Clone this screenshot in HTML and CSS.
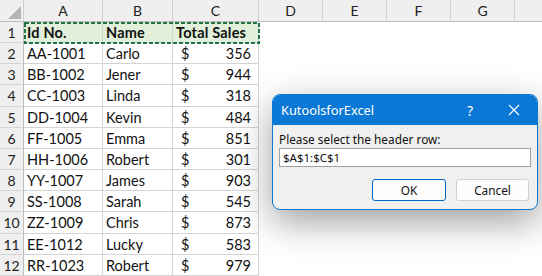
FILE: index.html
```html
<!DOCTYPE html>
<html lang="en">

<head>
    <meta charset="UTF-8">
    <meta name="viewport" content="width=device-width, initial-scale=1.0">
    <title>Select header row</title>

    <!--Style-->

    <link rel="stylesheet" href="styles.css">
</head>

<body>
    <div class="sheet">

        <!--Column headers-->

        <div class="colHeaders">
            <div class="corner"><span class="cornerMark"></span></div>
            <div class="colHead colA">A</div>
            <div class="colHead colB">B</div>
            <div class="colHead colC">C</div>
            <div class="colHead colWide">D</div>
            <div class="colHead colWide">E</div>
            <div class="colHead colWide">F</div>
            <div class="colHead colWide">G</div>
            <div class="colHead colRest"></div>
        </div>

        <!--Cells-->

        <div class="grid">
            <div class="rowHead">1</div>
            <div class="cell head">Id No.</div>
            <div class="cell head">Name</div>
            <div class="cell head">Total Sales</div>

            <div class="rowHead">2</div>
            <div class="cell">AA-1001</div>
            <div class="cell">Carlo</div>
            <div class="cell money"><span>$</span><span>356</span></div>

            <div class="rowHead">3</div>
            <div class="cell">BB-1002</div>
            <div class="cell">Jener</div>
            <div class="cell money"><span>$</span><span>944</span></div>

            <div class="rowHead">4</div>
            <div class="cell">CC-1003</div>
            <div class="cell">Linda</div>
            <div class="cell money"><span>$</span><span>318</span></div>

            <div class="rowHead">5</div>
            <div class="cell">DD-1004</div>
            <div class="cell">Kevin</div>
            <div class="cell money"><span>$</span><span>484</span></div>

            <div class="rowHead">6</div>
            <div class="cell">FF-1005</div>
            <div class="cell">Emma</div>
            <div class="cell money"><span>$</span><span>851</span></div>

            <div class="rowHead">7</div>
            <div class="cell">HH-1006</div>
            <div class="cell">Robert</div>
            <div class="cell money"><span>$</span><span>301</span></div>

            <div class="rowHead">8</div>
            <div class="cell">YY-1007</div>
            <div class="cell">James</div>
            <div class="cell money"><span>$</span><span>903</span></div>

            <div class="rowHead">9</div>
            <div class="cell">SS-1008</div>
            <div class="cell">Sarah</div>
            <div class="cell money"><span>$</span><span>545</span></div>

            <div class="rowHead">10</div>
            <div class="cell">ZZ-1009</div>
            <div class="cell">Chris</div>
            <div class="cell money"><span>$</span><span>873</span></div>

            <div class="rowHead">11</div>
            <div class="cell">EE-1012</div>
            <div class="cell">Lucky</div>
            <div class="cell money"><span>$</span><span>583</span></div>

            <div class="rowHead">12</div>
            <div class="cell">RR-1023</div>
            <div class="cell">Robert</div>
            <div class="cell money"><span>$</span><span>979</span></div>

            <!--copy marquee around A1:C1-->
            <svg class="marquee" width="236" height="22" viewBox="0 0 236 22">
                <rect x="1" y="1" width="234" height="20" fill="none" stroke="#217346" stroke-width="2" stroke-dasharray="4 2"></rect>
            </svg>
        </div>
    </div>

    <!--Dialog-->

    <div class="dialog">
        <div class="titleBar">
            <span class="titleText">KutoolsforExcel</span>
            <span class="helpBtn">?</span>
            <span class="closeBtn">
                <svg width="12" height="12" viewBox="0 0 12 12">
                    <path d="M1 1 L11 11 M11 1 L1 11" stroke="#ffffff" stroke-width="1.1" fill="none"></path>
                </svg>
            </span>
        </div>
        <div class="dialogBody">
            <div class="label">Please select the header row:</div>
            <div class="rangeInput">$A$1:$C$1</div>
            <div class="buttons">
                <button class="okButton">OK</button>
                <button class="cancelButton">Cancel</button>
            </div>
        </div>
    </div>
</body>

</html>
```

FILE: styles.css
```css
body {
    margin: 0;
    width: 542px;
    height: 276px;
    overflow: hidden;
    background-color: white;
    font-family: Lato, "Liberation Sans", sans-serif;
    position: relative;
}

/* column header bar */

.colHeaders {
    display: flex;
    height: 22px;
    background-color: #efefef;
    border-bottom: 1px solid #bdbdbd;
    box-sizing: border-box;
}

.corner {
    width: 24px;
    border-right: 1px solid #d0d0d0;
    box-sizing: border-box;
    position: relative;
}

.cornerMark {
    position: absolute;
    left: 8px;
    top: 6px;
    width: 0;
    height: 0;
    border-left: 13px solid transparent;
    border-bottom: 13px solid #b4b4b4;
}

.colHead {
    border-right: 1px solid #d0d0d0;
    box-sizing: border-box;
    text-align: center;
    font-size: 14px;
    line-height: 21px;
    color: #222;
}

.colA {
    width: 79px;
}

.colB {
    width: 70px;
}

.colC {
    width: 86px;
}

.colWide {
    width: 64px;
}

.colRest {
    flex: 1;
    border-right: none;
}

/* cells */

.grid {
    display: grid;
    grid-template-columns: 24px 79px 70px 86px;
    grid-auto-rows: 21.17px;
    width: 259px;
    position: relative;
}

.rowHead {
    background-color: #efefef;
    border-right: 1px solid #bdbdbd;
    border-bottom: 1px solid #d4d4d4;
    text-align: center;
    font-size: 14px;
    line-height: 21px;
    color: #222;
}

.cell {
    border-right: 1px solid #d4d4d4;
    border-bottom: 1px solid #d4d4d4;
    padding-left: 3px;
    font-size: 14.5px;
    line-height: 21px;
    color: #111;
    white-space: nowrap;
    overflow: hidden;
}

.head {
    background-color: #e2efda;
    font-weight: bold;
    letter-spacing: 0.2px;
}

.money {
    display: flex;
    justify-content: space-between;
    padding-left: 8px;
    padding-right: 7px;
}

.marquee {
    position: absolute;
    left: 24px;
    top: 0;
}

/* dialog */

.dialog {
    position: absolute;
    left: 272px;
    top: 94px;
    width: 266px;
    height: 116px;
    box-sizing: border-box;
    border: 1px solid #0a78d4;
    border-radius: 8px;
    background-color: #f0f0f0;
    overflow: hidden;
    box-shadow: 0 12px 36px rgba(0, 0, 0, 0.38);
    font-family: "Noto Sans", "Open Sans", sans-serif;
}

.titleBar {
    height: 30px;
    background-color: #0a78d4;
    color: white;
    display: flex;
    align-items: center;
}

.titleText {
    flex: 1;
    padding-left: 8px;
    font-size: 12.8px;
}

.helpBtn {
    width: 20px;
    text-align: center;
    font-size: 14px;
    margin-right: 28px;
}

.closeBtn {
    display: flex;
    margin-right: 17px;
}

.dialogBody {
    padding: 6px 6px 0 6px;
}

.label {
    font-size: 11.8px;
    line-height: 16px;
    color: #111;
}

.rangeInput {
    margin-top: 1px;
    height: 19px;
    box-sizing: border-box;
    border: 1px solid #a0a0a0;
    background-color: white;
    font-size: 11.5px;
    line-height: 17px;
    padding-left: 3px;
    color: #111;
}

.buttons {
    display: flex;
    justify-content: flex-end;
    gap: 10px;
    margin-top: 12px;
    padding-right: 2px;
}

.okButton,
.cancelButton {
    height: 22px;
    font-family: inherit;
    font-size: 11.8px;
    color: #111;
    border-radius: 3px;
    background-color: #fdfdfd;
    padding: 0;
}

.okButton {
    width: 74px;
    border: 1.5px solid #0067c0;
}

.cancelButton {
    width: 73px;
    border: 1px solid #d0d0d0;
}
```
